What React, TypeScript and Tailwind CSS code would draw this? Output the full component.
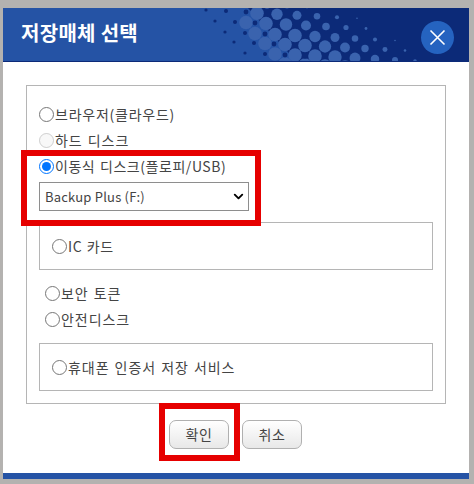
import { ChevronDown } from 'lucide-react'

const font = { fontFamily: '"Noto Sans CJK KR", "Liberation Sans", sans-serif' }

const lightRows = [
  { y: 4.5, x0: 267 },
  { y: 14.3, x0: 257 },
  { y: 23.5, x0: 246 },
  { y: 34.5, x0: 255 },
  { y: 44.5, x0: 265 },
  { y: 55, x0: 275 },
  { y: 65, x0: 285 },
]
const darkRows = [
  { y: 11, x0: 206, n: 3 },
  { y: 22, x0: 215, n: 3 },
  { y: 33, x0: 225, n: 3 },
  { y: 43, x0: 234, n: 3 },
  { y: 54, x0: 245, n: 4 },
]

function HeaderArt() {
  const light: { x: number; y: number; r: number }[] = []
  lightRows.forEach((row) => {
    for (let k = 0; k < 12; k++) {
      const x = row.x0 + k * 20
      const y = row.y + k
      const edge = 362 + 1.7 * (y - 15)
      const r = Math.min(6.8, (edge - x) / 15)
      if (r > 0.4) light.push({ x, y, r })
    }
  })
  return (
    <svg className="absolute inset-0" width="466" height="53" viewBox="3 9 466 53">
      <polygon points="0,9 248,9 296,62 0,62" fill="#2553a5" />
      {light.map((d, i) => (
        <circle key={i} cx={d.x} cy={d.y} r={d.r} fill="#3a63ae" />
      ))}
      {darkRows.map((row) =>
        Array.from({ length: row.n }).map((_, k) => (
          <circle key={`${row.y}-${k}`} cx={row.x0 + k * 20} cy={row.y + k} r={1.6 + k * 0.4} fill="#0c2a78" />
        )),
      )}
    </svg>
  )
}

function Radio({
  label,
  checked,
  disabled,
  spacing = 'tracking-[0.95px]',
}: {
  label: string
  checked?: boolean
  disabled?: boolean
  spacing?: string
}) {
  return (
    <label className={`flex items-center h-[26px] text-[14px] [word-spacing:1px] text-[#444] ${spacing}`}>
      <input
        type="radio"
        name="media"
        defaultChecked={checked}
        disabled={disabled}
        className="m-0 w-[15px] h-[15px] shrink-0"
      />
      <span className="ml-[1px]">{label}</span>
    </label>
  )
}

export default function App() {
  return (
    <div className="w-[474px] h-[484px] overflow-hidden bg-[#b4b2b0] pt-[8px] pl-[3px]" style={font}>
      <div className="relative w-[466px] h-[471px] bg-white flex flex-col">
        <div className="relative h-[54px] shrink-0 bg-[#0c2a78] overflow-hidden">
          <HeaderArt />
          <h1 className="absolute left-[18px] top-[10px] text-[20px] font-bold leading-[30px] tracking-[0.3px] text-white">저장매체 선택</h1>
          <button className="absolute left-[418px] top-[13px] w-[33px] h-[33px] rounded-full bg-[#2563c0] flex items-center justify-center">
            <svg width="17" height="17" viewBox="0 0 17 17" fill="none" stroke="white" strokeWidth="1.6">
              <path d="M1.5 1.5 L15.5 15.5 M15.5 1.5 L1.5 15.5" />
            </svg>
          </button>
        </div>

        <div className="ml-[23px] mt-[23px] w-[420px] h-[319px] border border-[#b5b5b5] pt-[15px] pr-[12px] pl-[12px]">
          <Radio label="브라우저(클라우드)" spacing="tracking-[0.75px]" />
          <Radio label="하드 디스크" disabled />
          <Radio label="이동식 디스크(플로피/USB)" checked spacing="tracking-[0.55px]" />
          <div className="relative mt-[3px] w-[210px]">
            <select className="block w-full h-[29px] appearance-none border border-[#8e8e8e] bg-white pl-[5px] text-[13px] tracking-[0.2px] text-[#444]" style={font}>
              <option>Backup Plus (F:)</option>
            </select>
            <ChevronDown className="absolute right-[3px] top-[7px] w-[15px] h-[15px] text-black pointer-events-none" strokeWidth={3} />
          </div>
          <div className="mt-[11px] w-[394px] h-[48px] border border-[#b5b5b5] pl-[12px] flex items-center">
            <Radio label="IC 카드" spacing="tracking-[0.55px]" />
          </div>
          <div className="mt-[10px] pl-[6px]">
            <Radio label="보안 토큰" />
            <Radio label="안전디스크" />
          </div>
          <div className="mt-[11px] w-[394px] h-[48px] border border-[#b5b5b5] pl-[12px] flex items-center">
            <Radio label="휴대폰 인증서 저장 서비스" />
          </div>
        </div>

        <div className="flex mt-[16px] ml-[166px] gap-[13px]">
          <button className="w-[60px] h-[29px] rounded-[7px] border border-[#b0b0b0] bg-[linear-gradient(#ffffff,#e8e8e8)] text-[14px] tracking-[0.5px] text-[#444]">확인</button>
          <button className="w-[60px] h-[29px] rounded-[7px] border border-[#b0b0b0] bg-[linear-gradient(#ffffff,#e8e8e8)] text-[14px] tracking-[0.5px] text-[#444]">취소</button>
        </div>

        <div className="mt-auto h-[6px] bg-[#2553a5]" />

        {/* 빨간 강조 박스 */}
        <div className="absolute left-[18px] top-[142px] w-[240px] h-[76px] border-[6px] border-[#e60000] pointer-events-none" />
        <div className="absolute left-[156px] top-[395px] w-[81px] h-[58px] border-[6px] border-[#e60000] pointer-events-none" />
      </div>
    </div>
  )
}
